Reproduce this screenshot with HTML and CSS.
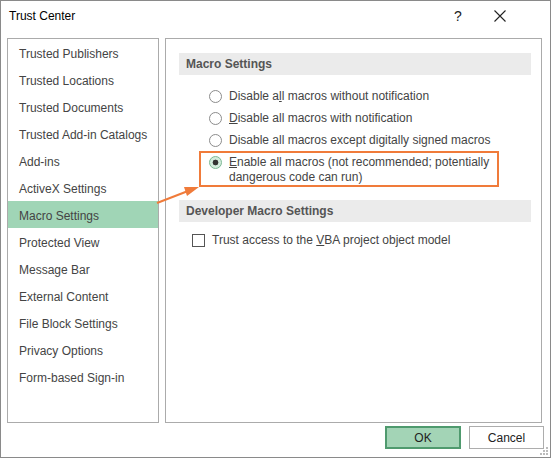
FILE: index.html
```html
<!DOCTYPE html>
<html lang="en">

<head>
    <meta charset="UTF-8">
    <title>Trust Center</title>
    <link rel="stylesheet" href="styles.css">
</head>

<body>
    <div class="window">
        <div class="titlebar">
            <span class="title">Trust Center</span>
            <span class="help">?</span>
            <span class="close">
                <svg width="12" height="12" viewBox="0 0 12 12"><path d="M0.5 0.5 L11.5 11.5 M11.5 0.5 L0.5 11.5" stroke="#222" stroke-width="1.1" fill="none"/></svg>
            </span>
        </div>

        <div class="content">
            <ul class="nav">
                <li>Trusted Publishers</li>
                <li>Trusted Locations</li>
                <li>Trusted Documents</li>
                <li>Trusted Add-in Catalogs</li>
                <li>Add-ins</li>
                <li>ActiveX Settings</li>
                <li class="active">Macro Settings</li>
                <li>Protected View</li>
                <li>Message Bar</li>
                <li>External Content</li>
                <li>File Block Settings</li>
                <li>Privacy Options</li>
                <li>Form-based Sign-in</li>
            </ul>

            <div class="panel">
                <div class="section">Macro Settings</div>
                <div class="options">
                    <div class="option"><span class="radio"></span><span>Disable a<u>l</u>l macros without notification</span></div>
                    <div class="option"><span class="radio"></span><span><u>D</u>isable all macros with notification</span></div>
                    <div class="option"><span class="radio"></span><span>Disable all macros except digitally signed macros</span></div>
                    <div class="option wrap"><span class="radio checked"></span><span><u>E</u>nable all macros (not recommended; potentially<br>dangerous code can run)</span></div>
                </div>
                <div class="section">Developer Macro Settings</div>
                <div class="check-row"><span class="checkbox"></span><span>Trust access to the <u>V</u>BA project object model</span></div>
            </div>
        </div>

        <div class="footer">
            <button class="btn primary">OK</button>
            <button class="btn">Cancel</button>
        </div>

        <!-- callout -->
        <div class="highlight"></div>
        <svg class="arrow" width="551" height="458" viewBox="0 0 551 458">
            <line x1="157" y1="203" x2="188" y2="191" stroke="#f07b3a" stroke-width="2"/>
            <polygon points="199,187 184,187 187,196" fill="#f07b3a"/>
        </svg>

        <div class="grip">
            <svg width="9" height="9" viewBox="0 0 9 9" fill="#bbb">
                <rect x="6" y="0" width="2" height="2"/>
                <rect x="3" y="3" width="2" height="2"/>
                <rect x="6" y="3" width="2" height="2"/>
                <rect x="0" y="6" width="2" height="2"/>
                <rect x="3" y="6" width="2" height="2"/>
                <rect x="6" y="6" width="2" height="2"/>
            </svg>
        </div>
    </div>
</body>

</html>
```

FILE: styles.css
```css
* {
    margin: 0;
    padding: 0;
    box-sizing: border-box;
}

body {
    font-family: "Liberation Sans", Arial, sans-serif;
    font-size: 12px;
    color: #444;
    background: #fff;
}

.window {
    position: relative;
    width: 551px;
    height: 458px;
    border: 1px solid #8a8a8a;
    background: #fff;
}

.titlebar {
    display: flex;
    align-items: center;
    height: 30px;
    padding-left: 8px;
    color: #000;
}

.title {
    flex: 1;
}

.help {
    width: 14px;
    margin-right: 26px;
    font-size: 14px;
    color: #222;
}

.close {
    display: flex;
    margin-right: 44px;
}

.content {
    display: flex;
    height: 385px;
    margin-top: 7px;
    padding-left: 6px;
}

.nav {
    list-style: none;
    width: 152px;
    border: 1px solid #ababab;
}

.nav>li {
    height: 27px;
    line-height: 24px;
    padding: 3px 0 0 11px;
    white-space: nowrap;
}

.nav>li.active {
    background-color: #a0d5b6;
}

.panel {
    width: 377px;
    margin-left: 6px;
    border: 1px solid #ababab;
    padding: 14px 10px 0 13px;
}

.section {
    height: 22px;
    line-height: 22px;
    padding-left: 7px;
    background-color: #ebebeb;
    font-weight: bold;
    color: #555;
}

.options {
    padding: 10px 0 13px 30px;
}

.option {
    display: flex;
    align-items: center;
    height: 22px;
}

.option.wrap {
    align-items: flex-start;
    height: 36px;
    padding-top: 4px;
    line-height: 15px;
}

.radio {
    width: 13px;
    height: 13px;
    margin-right: 7px;
    border: 1px solid #8c8c8c;
    border-radius: 50%;
    background: #fff;
    flex-shrink: 0;
}

.option.wrap .radio {
    margin-top: 1px;
}

.radio.checked {
    border-color: #7bb894;
    background: radial-gradient(circle, #333 0 2.6px, #d3ecdd 3.2px);
}

.check-row {
    display: flex;
    align-items: center;
    height: 36px;
    padding-left: 13px;
}

.checkbox {
    width: 13px;
    height: 13px;
    margin-right: 7px;
    border: 1px solid #555;
    background: #fff;
}

.footer {
    display: flex;
    justify-content: flex-end;
    gap: 8px;
    padding: 3px 6px 0 0;
}

.btn {
    width: 75px;
    height: 23px;
    font-family: inherit;
    font-size: 12px;
    color: #222;
    background: #fff;
    border: 1px solid #adadad;
}

.btn.primary {
    width: 76px;
    background: #a3d4b6;
    border: 2px solid #4f9a6e;
}

.highlight {
    position: absolute;
    left: 198px;
    top: 150px;
    width: 300px;
    height: 36px;
    border: 2px solid #f07b3a;
}

.arrow {
    position: absolute;
    left: -1px;
    top: -1px;
    pointer-events: none;
}

.grip {
    position: absolute;
    right: 1px;
    bottom: 1px;
    display: flex;
}
```
